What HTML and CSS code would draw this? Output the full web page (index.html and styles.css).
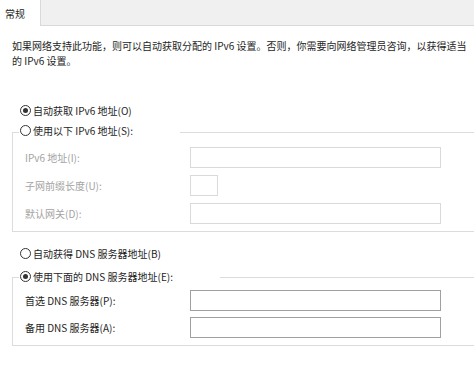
FILE: index.html
```html
<!DOCTYPE html>
<html lang="zh-CN">
<head>
    <meta charset="UTF-8">
    <title>IPv6 属性</title>
    <link rel="stylesheet" href="styles.css">
</head>
<body>
    <!-- tab strip -->
    <div class="tabs">
        <div class="tab">常规</div>
    </div>

    <div class="page">
        <p class="desc">如果网络支持此功能，则可以自动获取分配的 IPv6 设置。否则，你需要向网络管理员咨询，以获得适当<br>的 IPv6 设置。</p>

        <!-- ipv6 address -->
        <div class="radio-row first">
            <span class="radio checked"></span><span>自动获取 IPv6 地址(O)</span>
        </div>
        <div class="group group-ip">
            <div class="legend ip-legend">
                <span class="radio"></span><span>使用以下 IPv6 地址(S):</span>
            </div>
            <div class="fields disabled">
                <label>IPv6 地址(I):</label><div class="box"></div>
                <label>子网前缀长度(U):</label><div class="box small"></div>
                <label>默认网关(D):</label><div class="box"></div>
            </div>
        </div>

        <!-- dns -->
        <div class="radio-row dns-auto">
            <span class="radio"></span><span>自动获得 DNS 服务器地址(B)</span>
        </div>
        <div class="group group-dns">
            <div class="legend dns-legend">
                <span class="radio checked"></span><span>使用下面的 DNS 服务器地址(E):</span>
            </div>
            <div class="fields">
                <label>首选 DNS 服务器(P):</label><div class="box"></div>
                <label>备用 DNS 服务器(A):</label><div class="box"></div>
            </div>
        </div>
    </div>
</body>
</html>
```

FILE: styles.css
```css
*{
    margin: 0;
    padding: 0;
    box-sizing: border-box;
}
html,body{
    background: #fff;
    overflow: hidden;
}
body{
    font-family: "Noto Sans CJK SC", "Microsoft YaHei", sans-serif;
    font-size: 10px;
    color: #1e1e1e;
    width: 474px;
    height: 365px;
}
.tabs{
    height: 26px;
    background: #f0f0f0;
    border-bottom: 1px solid #d9d9d9;
    display: flex;
}
.tab{
    width: 41px;
    height: 26px;
    background: #fff;
    border-right: 1px solid #d9d9d9;
    padding: 6px 0 0 5px;
    line-height: 15px;
}
.desc{
    margin: 12px 0 0 12px;
    line-height: 15px;
    white-space: nowrap;
}
.radio-row,.legend{
    display: flex;
    align-items: center;
    height: 16px;
    white-space: nowrap;
}
.radio-row{
    padding-left: 20px;
}
.radio-row.first{
    margin-top: 34px;
}
.radio-row.dns-auto{
    margin-top: 13px;
}
.radio{
    width: 11px;
    height: 11px;
    border: 1px solid #333;
    border-radius: 50%;
    margin-right: 2px;
    display: flex;
    align-items: center;
    justify-content: center;
    background: #fff;
}
.radio.checked::after{
    content: "";
    width: 5px;
    height: 5px;
    border-radius: 50%;
    background: #333;
}
.group{
    border: 1px solid #dcdcdc;
    border-right: none;
    margin-left: 12px;
}
.legend{
    background: #fff;
    margin-left: 6px;
    padding-left: 1px;
}
.group-ip{
    margin-top: 14px;
    padding-bottom: 7px;
}
.ip-legend{
    width: 161px;
    margin-top: -11px;
}
.group-dns{
    margin-top: 16px;
    padding-bottom: 7px;
}
.dns-legend{
    width: 201px;
    margin-top: -10px;
}
.fields{
    display: grid;
    grid-template-columns: 165px 251px;
    row-gap: 7px;
    padding-left: 12px;
    margin-top: 9px;
    align-items: center;
}
.group-dns .fields{
    row-gap: 6px;
    margin-top: 6px;
}
.box{
    height: 21px;
    border: 1px solid #a0a0a0;
    background: #fff;
}
.box.small{
    width: 28px;
}
.disabled label{
    color: #a3a3a3;
}
.disabled .box{
    border-color: #dadada;
}
```
